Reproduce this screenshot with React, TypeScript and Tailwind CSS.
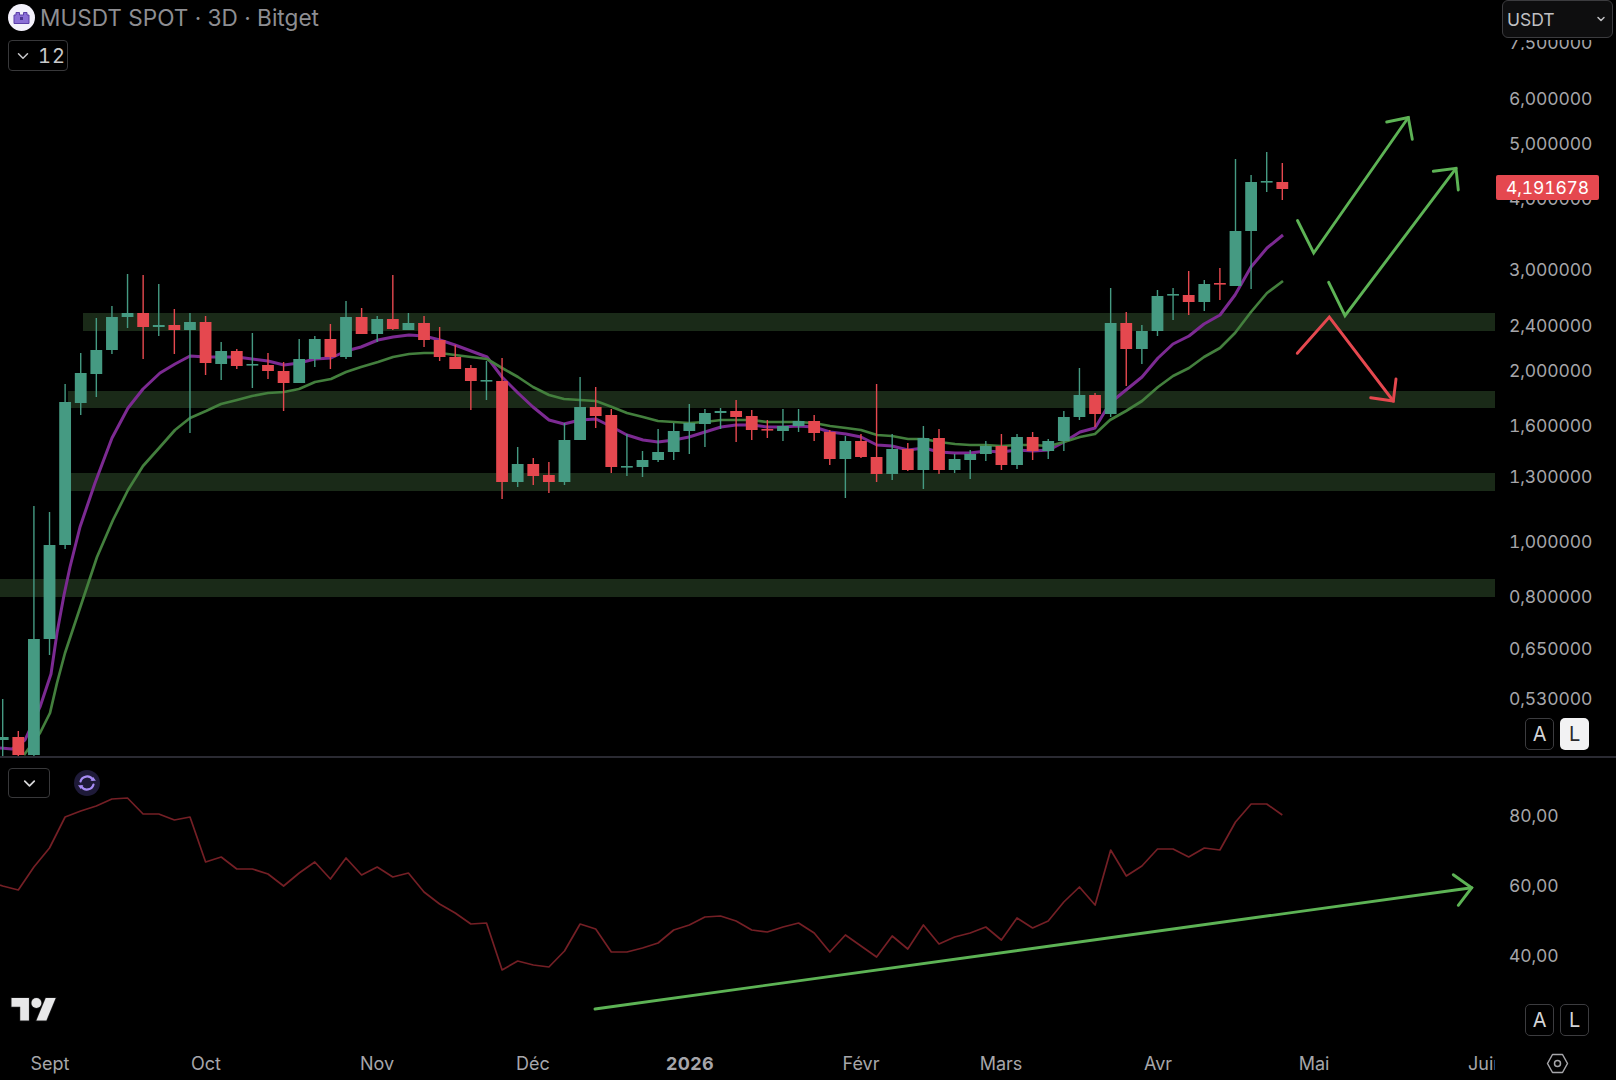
import { ChevronDown } from "lucide-react";

// wick top, body top, body bottom, wick bottom
type Candle = [number, number, number, number];

const green = "#459a82";
const red = "#e5484f";

const candles: Candle[] = [
  [699, 737, 740, 757], [731, 737, 755, 757], [506, 639, 755, 757], [512, 545, 639, 655],
  [384, 402, 545, 549], [353, 373, 403, 415], [318, 350, 374, 397], [306, 317, 350, 354],
  [274, 313, 317, 328], [275, 313, 327, 359], [284, 325, 327, 336], [309, 325, 330, 354],
  [313, 322, 330, 433], [316, 322, 363, 375], [342, 351, 364, 380], [349, 351, 366, 369],
  [333, 364, 365, 388], [353, 365, 371, 379], [362, 371, 383, 411], [339, 359, 383, 383],
  [336, 339, 359, 367], [324, 339, 357, 369], [301, 317, 357, 359], [308, 317, 334, 334],
  [316, 319, 334, 342], [275, 319, 329, 330], [313, 323, 330, 330], [316, 323, 340, 347],
  [327, 340, 357, 361], [345, 357, 369, 369], [365, 368, 381, 410], [361, 380, 381, 400],
  [358, 381, 482, 499], [447, 464, 482, 487], [458, 464, 476, 485], [462, 475, 482, 493],
  [423, 440, 482, 485], [377, 407, 440, 440], [387, 407, 416, 428], [409, 415, 467, 473],
  [434, 466, 467, 476], [451, 460, 467, 477], [429, 452, 460, 462], [423, 431, 452, 460],
  [404, 423, 431, 454], [409, 413, 424, 447], [408, 411, 413, 429], [400, 411, 417, 442],
  [410, 416, 430, 440], [420, 429, 430, 438], [409, 426, 431, 441], [409, 421, 426, 432],
  [415, 421, 433, 441], [430, 432, 459, 465], [436, 441, 459, 498], [434, 441, 457, 458],
  [384, 457, 474, 482], [434, 449, 474, 480], [443, 449, 470, 471], [426, 438, 470, 489],
  [429, 438, 470, 474], [454, 459, 470, 473], [450, 454, 460, 479], [441, 446, 454, 461],
  [434, 446, 465, 470], [434, 437, 465, 469], [432, 437, 451, 460], [439, 441, 451, 459],
  [411, 417, 441, 451], [368, 395, 417, 420], [393, 395, 414, 427], [288, 323, 414, 417],
  [312, 323, 349, 386], [325, 331, 349, 364], [290, 296, 331, 336], [288, 294, 295, 320],
  [271, 295, 302, 315], [280, 284, 302, 311], [268, 283, 284, 300], [159, 231, 286, 286],
  [175, 182, 231, 289], [152, 181, 182, 192], [163, 182, 189, 200],
];

const redCandles = new Set([
  1, 9, 11, 13, 15, 17, 18, 21, 23, 25, 27, 28, 29, 30, 32, 34, 35, 38, 39, 47, 48, 49, 52, 53,
  55, 56, 58, 60, 64, 66, 70, 72, 76, 78, 82,
]);

const candleX = (i: number) => 2.7 + 15.605 * i;

const purpleLine =
  "0,748 12,749 25,740 40,707 51,674 57,633 64,595 70,567 80,527 95,483 112,438 128,408 143,389 160,373 175,364 190,356 206,357 221,357 237,357 252,359 268,361 284,365 299,363 315,359 331,358 346,351 361,347 378,340 393,337 409,335 424,336 440,340 455,345 471,351 487,357 502,377 518,393 533,407 549,420 564,424 580,420 596,419 612,427 627,435 643,440 658,442 674,440 689,437 705,432 721,427 736,425 752,425 767,427 783,427 798,426 814,427 830,432 846,434 861,437 877,445 892,446 908,450 924,448 939,452 955,453 970,453 986,451 1001,452 1017,450 1033,451 1049,450 1064,442 1080,432 1095,428 1110,403 1126,390 1142,377 1158,358 1173,344 1189,336 1204,324 1220,315 1235,295 1251,267 1267,248 1283,235";

const greenLine =
  "24,755 40,733 50,713 57,683 65,653 75,623 85,593 97,557 113,520 128,490 143,466 160,447 175,430 190,418 206,411 221,404 237,400 252,396 268,393 284,392 299,389 315,382 331,379 346,372 361,367 378,362 393,357 409,354 424,353 440,353 455,355 471,357 487,359 502,368 518,377 533,387 549,395 564,399 580,400 596,401 612,407 627,413 643,417 658,421 674,422 689,423 705,422 721,420 736,420 752,420 767,422 783,422 798,422 814,423 830,426 846,428 861,430 877,435 892,436 908,439 924,439 939,442 955,444 970,445 986,445 1001,446 1017,445 1033,445 1049,446 1064,442 1080,437 1095,434 1110,420 1126,411 1142,401 1158,387 1173,376 1189,368 1204,357 1220,348 1235,333 1251,312 1267,293 1283,281";

const rsi = [
  886, 890, 867, 848, 817, 811, 806, 799, 798, 814, 814, 820, 817, 862, 857, 869, 869, 874, 886, 873,
  862, 879, 858, 875, 867, 877, 873, 892, 904, 913, 924, 923, 970, 961, 965, 967, 951, 924, 929, 952,
  952, 948, 943, 930, 925, 917, 916, 921, 930, 932, 927, 923, 933, 952, 935, 946, 957, 936, 949, 925,
  944, 937, 933, 927, 940, 918, 928, 921, 902, 887, 905, 850, 876, 866, 849, 849, 857, 848, 850, 822,
  804, 804, 815,
];

const zones = [
  { x: 83, y: 313, h: 18 },
  { x: 68, y: 391, h: 17 },
  { x: 68, y: 473, h: 18 },
  { x: 0, y: 579, h: 18 },
];

const priceLabels = [
  { text: "6,000000", y: 99 },
  { text: "5,000000", y: 144 },
  { text: "4,000000", y: 199 },
  { text: "3,000000", y: 270 },
  { text: "2,400000", y: 326 },
  { text: "2,000000", y: 371 },
  { text: "1,600000", y: 426 },
  { text: "1,300000", y: 477 },
  { text: "1,000000", y: 542 },
  { text: "0,800000", y: 597 },
  { text: "0,650000", y: 649 },
  { text: "0,530000", y: 699 },
];

const rsiLabels = [
  { text: "80,00", y: 58 },
  { text: "60,00", y: 128 },
  { text: "40,00", y: 198 },
];

const months = [
  { text: "Sept", x: 50 },
  { text: "Oct", x: 206 },
  { text: "Nov", x: 377 },
  { text: "Déc", x: 533 },
  { text: "2026", x: 690, bold: true },
  { text: "Févr", x: 861 },
  { text: "Mars", x: 1001 },
  { text: "Avr", x: 1158 },
  { text: "Mai", x: 1314 },
  { text: "Juin", x: 1486 },
];

function AutoLogButtons({ logActive }: { logActive: boolean }) {
  return (
    <div className="absolute left-[30px] bottom-[6px] flex gap-[6px] text-[20px] leading-none">
      <div className="flex h-[32px] w-[29px] items-center justify-center rounded-[5px] border border-[#3c3c3f] text-[#d4d4d6]">
        A
      </div>
      <div
        className={
          logActive
            ? "flex h-[32px] w-[29px] items-center justify-center rounded-[5px] bg-[#f2f2f3] text-[#2a2a2c]"
            : "flex h-[32px] w-[29px] items-center justify-center rounded-[5px] border border-[#3c3c3f] text-[#d4d4d6]"
        }
      >
        L
      </div>
    </div>
  );
}

function MainChart() {
  return (
    <svg width="1495" height="756" viewBox="0 0 1495 756" className="block">
      {zones.map((z) => (
        <rect key={z.y} x={z.x} y={z.y} width={1495 - z.x} height={z.h} fill="#1a2a18" />
      ))}
      <polyline points={purpleLine} fill="none" stroke="#7c2a92" strokeWidth="3" strokeLinejoin="round" />
      <polyline points={greenLine} fill="none" stroke="#437f3d" strokeWidth="2.7" strokeLinejoin="round" />
      {candles.map(([wt, bt, bb, wb], i) => {
        const color = redCandles.has(i) ? red : green;
        const x = candleX(i);
        return (
          <g key={i} fill={color}>
            <rect x={x - 0.7} y={wt} width="1.4" height={wb - wt} />
            <rect x={x - 5.9} y={bt} width="11.8" height={Math.max(bb - bt, 1.6)} />
          </g>
        );
      })}
      <g fill="none" strokeWidth="2.9" strokeLinecap="round" strokeLinejoin="miter">
        <polyline points="1297.5,220.5 1313.7,253 1408.3,117.5" stroke="#5db355" />
        <polyline points="1386.7,122 1408.3,117.5 1412.3,139.3" stroke="#5db355" />
        <polyline points="1328.7,282.3 1345,315.7 1456,168.3" stroke="#5db355" />
        <polyline points="1433.3,171.3 1456,168.3 1458.3,190" stroke="#5db355" />
        <polyline points="1297.3,353.3 1329.3,317 1393.3,401" stroke={red} />
        <polyline points="1370.7,397.7 1393.3,401 1396,379" stroke={red} />
      </g>
    </svg>
  );
}

function RsiChart() {
  const points = rsi.map((y, i) => `${candleX(i).toFixed(1)},${y}`).join(" ");
  return (
    <svg width="1495" height="284" viewBox="0 758 1495 284" className="block">
      <polyline points={`0,885 ${points}`} fill="none" stroke="#741f25" strokeWidth="1.7" strokeLinejoin="round" />
      <g fill="none" stroke="#5db355" strokeWidth="2.9" strokeLinecap="round">
        <line x1="595" y1="1009" x2="1471.7" y2="887.7" />
        <polyline points="1453.3,874.7 1471.7,887.7 1458.3,905.3" />
      </g>
      {/* TradingView mark */}
      <g transform="translate(11.5 993) scale(1.245)">
        <g fill="#e8e8e9" stroke="#1c1c1d" strokeWidth="1.2" paintOrder="stroke">
          <path d="M14 22H7V11H0V4h14v18z" />
          <path d="M28 22h-8l7.5-18h8L28 22z" />
          <circle cx="20" cy="8" r="4" />
        </g>
      </g>
    </svg>
  );
}

export default function App() {
  return (
    <div
      className="flex h-[1080px] w-[1616px] flex-col overflow-hidden bg-black text-[#a6a6aa]"
      style={{ fontFamily: "Inter, 'Liberation Sans', sans-serif" }}
    >
      {/* price pane */}
      <div className="relative flex h-[756px] shrink-0">
        <div className="w-[1495px] shrink-0 overflow-hidden">
          <MainChart />
        </div>
        <div className="relative flex-1 text-[17.5px] leading-none tracking-[-0.12px] tabular-nums">
          <div className="absolute left-[14px] top-[40px] h-[10px] overflow-hidden">
            <div className="mt-[-6px]">7,500000</div>
          </div>
          {priceLabels.map((l) => (
            <div key={l.y} className="absolute left-[14px] -translate-y-1/2" style={{ top: l.y }}>
              {l.text}
            </div>
          ))}
          <div className="absolute left-px top-[175px] flex h-[25px] w-[103px] items-center justify-center rounded-[2px] bg-[#e5484f] text-white">
            4,191678
          </div>
          <AutoLogButtons logActive />
        </div>

        {/* legend */}
        <div className="absolute left-[8px] top-[4px] flex flex-col items-start gap-[9px]">
          <div className="flex items-center gap-[5px]">
            <svg width="27" height="27" viewBox="0 0 27 27">
              <circle cx="13.5" cy="13.5" r="13.5" fill="#f3f1fb" />
              <path
                d="M6 11h2V8.5h3.5V11h4V8.5H19V11h2v8.5H6z"
                fill="#8b6fd6"
                stroke="#5b3fa8"
                strokeWidth="1"
                strokeLinejoin="round"
              />
              <rect x="12" y="13" width="3" height="3" fill="#4a3490" />
            </svg>
            <span className="mt-[2px] text-[22.6px] leading-none text-[#8e8e92]">MUSDT SPOT · 3D · Bitget</span>
          </div>
          <div className="flex h-[31px] w-[60px] items-center gap-[6px] rounded-[4px] border border-[#38383a] pl-[5px] text-[20px] leading-none text-[#c9c9cb]">
            <ChevronDown size={18} strokeWidth={2} />
            <span className="tracking-[1px] tabular-nums">12</span>
          </div>
        </div>

        {/* currency select */}
        <div className="absolute right-[3px] top-0 flex h-[38px] w-[111px] items-center justify-between rounded-[6px] border border-[#3c3c3f] bg-[#0e0e0f] pl-[4px] pr-[5px] text-[17.5px] leading-none text-[#c0c0c3]">
          <span className="mt-[2px]">USDT</span>
          <ChevronDown size={12} strokeWidth={3} />
        </div>
      </div>

      <div className="h-[2px] shrink-0 bg-[#2a2a32]" />

      {/* rsi pane */}
      <div className="relative flex h-[284px] shrink-0">
        <div className="w-[1495px] shrink-0 overflow-hidden">
          <RsiChart />
        </div>
        <div className="relative flex-1 text-[17.5px] leading-none tracking-[-0.12px] tabular-nums">
          {rsiLabels.map((l) => (
            <div key={l.y} className="absolute left-[14px] -translate-y-1/2" style={{ top: l.y }}>
              {l.text}
            </div>
          ))}
          <AutoLogButtons logActive={false} />
        </div>

        <div className="absolute left-[8px] top-[10px] flex items-center gap-[24px]">
          <div className="flex h-[30px] w-[42px] items-center justify-center rounded-[4px] border border-[#38383a] text-[#d8d8da]">
            <ChevronDown size={19} strokeWidth={2.2} />
          </div>
          <svg width="26" height="26" viewBox="0 0 26 26">
            <circle cx="13" cy="13" r="13" fill="#1e1a38" />
            <g fill="none" stroke="#a78cf5" strokeWidth="2.2" strokeLinecap="round">
              <path d="M6.5 11.5A6.8 6.8 0 0 1 18.8 9.6" />
              <path d="M19.5 14.5A6.8 6.8 0 0 1 7.2 16.4" />
            </g>
            <path d="M16.5 10.8h5.4l-2.7-3.9z M4 15.2h5.4l-2.7 3.9z" fill="#a78cf5" />
          </svg>
        </div>
      </div>

      {/* time axis */}
      <div className="flex h-[38px] shrink-0 text-[18px] leading-none">
        <div className="relative w-[1495px] shrink-0 overflow-hidden">
          {months.map((m) => (
            <span
              key={m.text}
              className={
                m.bold
                  ? "absolute top-[13px] -translate-x-1/2 font-bold tracking-[0.4px]"
                  : "absolute top-[13px] -translate-x-1/2"
              }
              style={{ left: m.x }}
            >
              {m.text}
            </span>
          ))}
        </div>
        <div className="flex flex-1 items-start pl-[51px] pt-[11px]">
          <svg width="23" height="21" viewBox="0 0 23 21">
            <path d="M6.5 1.5h10l5 9-5 9h-10l-5-9z" fill="none" stroke="#a6a6aa" strokeWidth="1.5" strokeLinejoin="round" />
            <circle cx="11.5" cy="10.5" r="3" fill="none" stroke="#a6a6aa" strokeWidth="1.5" />
          </svg>
        </div>
      </div>
    </div>
  );
}
